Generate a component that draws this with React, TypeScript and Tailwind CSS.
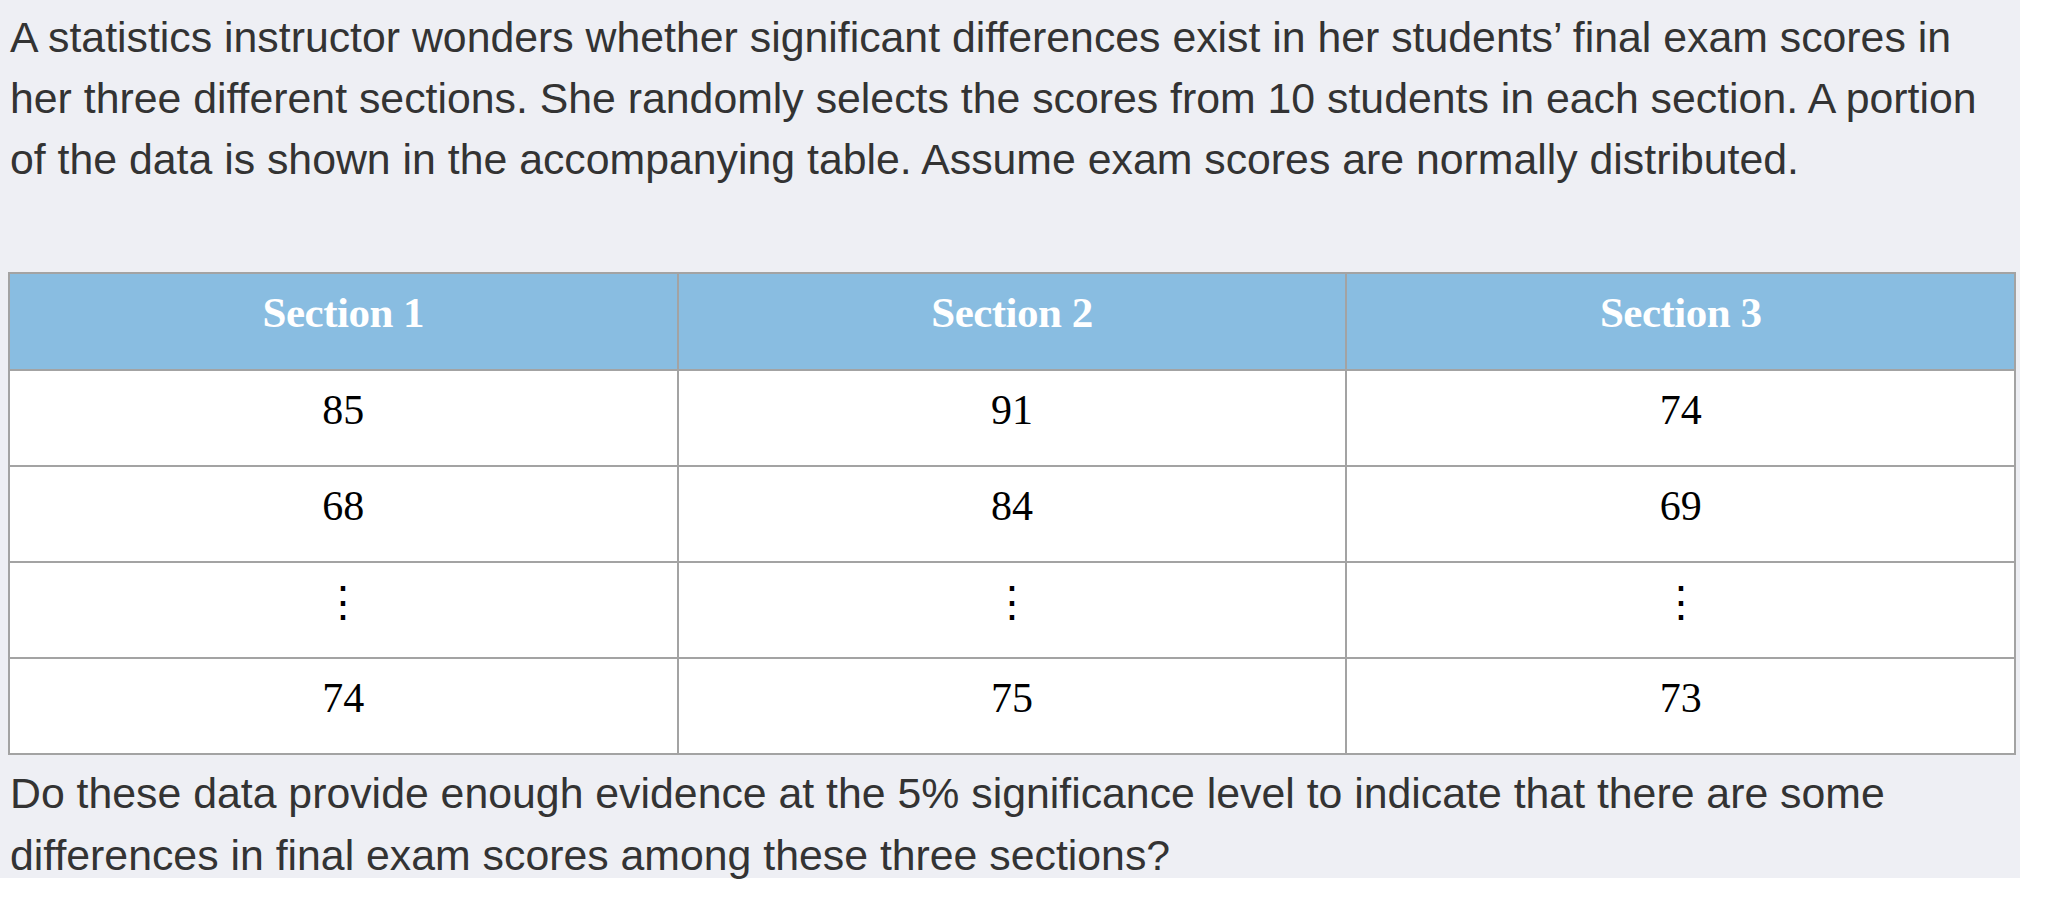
const rows = [
  ['85', '91', '74'],
  ['68', '84', '69'],
  ['⋮', '⋮', '⋮'],
  ['74', '75', '73'],
];

export default function App() {
  return (
    <div className="w-[2046px] h-[904px] bg-white">
      <div className="w-[2020px] h-[878px] bg-[#eeeff4] text-[#333333] font-['Liberation_Sans',Arial,sans-serif]">
        <p className="pl-[10px] pt-[7px] text-[42.8px] leading-[61px] whitespace-nowrap">
          A statistics instructor wonders whether significant differences exist in her students’ final exam scores in
          <br />
          her three different sections. She randomly selects the scores from 10 students in each section. A portion
          <br />
          of the data is shown in the accompanying table. Assume exam scores are normally distributed.
        </p>

        <table className="ml-[8px] mt-[82px] w-[2008px] border-collapse table-fixed font-['Liberation_Serif','Times_New_Roman',serif]">
          <thead>
            <tr className="h-[97px] bg-[#89bde1]">
              {['Section 1', 'Section 2', 'Section 3'].map((h) => (
                <th
                  key={h}
                  className="border-2 border-[#a3a3a3] pb-[16px] text-white text-[43px] font-bold text-center tracking-[-0.5px]"
                >
                  {h}
                </th>
              ))}
            </tr>
          </thead>
          <tbody>
            {rows.map((r, i) => (
              <tr key={i} className="h-[96px] bg-white">
                {r.map((v, j) => (
                  <td
                    key={j}
                    className="border-2 border-[#a3a3a3] pb-[16px] text-black text-[42px] text-center"
                  >
                    {v}
                  </td>
                ))}
              </tr>
            ))}
          </tbody>
        </table>

        <p className="pl-[10px] pt-[7px] text-[42.8px] leading-[62px] whitespace-nowrap">
          Do these data provide enough evidence at the 5% significance level to indicate that there are some
          <br />
          differences in final exam scores among these three sections?
        </p>
      </div>
    </div>
  );
}
